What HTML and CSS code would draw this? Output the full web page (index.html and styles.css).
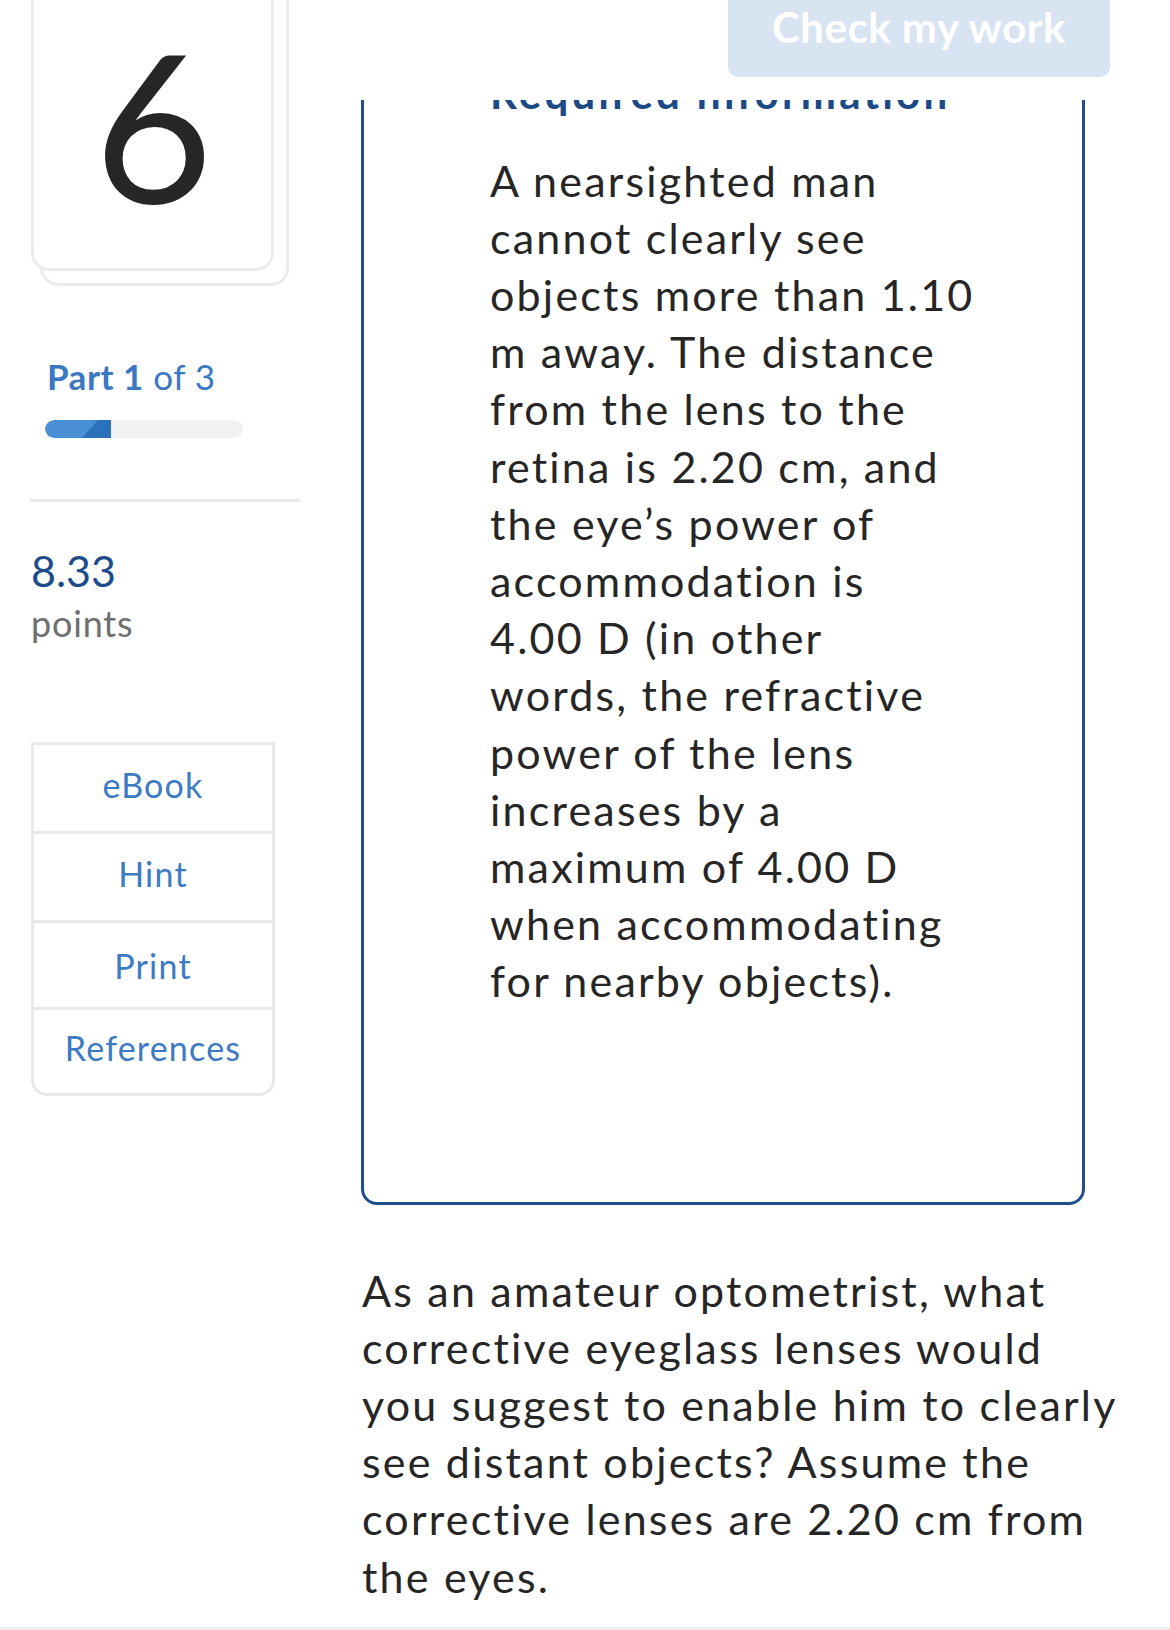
FILE: index.html
```html
<!DOCTYPE html>
<html lang="en">
<head>
<meta charset="utf-8">
<title>Question 6</title>
<link rel="stylesheet" href="styles.css">
</head>
<body>
<div class="page">
  <aside class="sidebar">
    <div class="qnum">
      <div class="qback"></div>
      <div class="qcard"><span class="qdigit">6</span></div>
    </div>
    <div class="part"><b>Part 1</b> of 3</div>
    <div class="progress"><div class="fill" style="width:33.3%"></div></div>
    <div class="divider"></div>
    <div class="score">8.33</div>
    <div class="points">points</div>
    <ul class="tools">
      <li>eBook</li>
      <li>Hint</li>
      <li>Print</li>
      <li>References</li>
    </ul>
  </aside>
  <main class="main">
    <div class="topbar"><button class="check" type="button">Check my work</button></div>
    <section class="info">
      <h2 class="info-title">Required information</h2>
      <p class="info-text">A nearsighted man<br>cannot clearly see<br>objects more than 1.10<br>m away. The distance<br>from the lens to the<br>retina is 2.20 cm, and<br>the eye’s power of<br>accommodation is<br>4.00 D (in other<br>words, the refractive<br>power of the lens<br>increases by a<br>maximum of 4.00 D<br>when accommodating<br>for nearby objects).</p>
    </section>
    <p class="question">As an amateur optometrist, what<br>corrective eyeglass lenses would<br>you suggest to enable him to clearly<br>see distant objects? Assume the<br>corrective lenses are 2.20 cm from<br>the eyes.</p>
  </main>
</div>
<div class="bottomline"></div>
</body>
</html>
```
FILE: styles.css
```css
html, body {
  margin: 0;
  padding: 0;
  background: #ffffff;
}
body {
  width: 1170px;
  height: 1630px;
  overflow: hidden;
  position: relative;
  font-family: Lato, "Noto Sans", sans-serif;
  color: #262626;
}
.page {
  display: flex;
  align-items: flex-start;
}
.sidebar {
  width: 361px;
  flex: none;
  box-sizing: border-box;
  padding-left: 31px;
  display: flex;
  flex-direction: column;
  align-items: flex-start;
}
.qnum {
  position: relative;
  width: 243px;
  height: 271px;
}
.qback {
  position: absolute;
  left: 9px;
  right: -15px;
  top: -30px;
  bottom: -15px;
  border: 3px solid #ececec;
  border-radius: 18px;
  background: #fff;
}
.qcard {
  position: relative;
  box-sizing: border-box;
  width: 243px;
  height: 271px;
  padding-top: 1px;
  border: 3px solid #ececec;
  border-top: 0;
  border-radius: 0 0 18px 18px;
  background: #fff;
  text-align: center;
}
.qdigit {
  display: block;
  font-size: 205px;
  line-height: 246px;
  color: #262626;
  margin-left: 2px;
}
.part {
  margin-top: 83px;
  margin-left: 16px;
  font-size: 35px;
  line-height: 44px;
  color: #3a78c2;
  letter-spacing: 0.5px;
}
.part b {
  font-weight: 700;
}
.progress {
  margin-top: 22px;
  margin-left: 14px;
  width: 198px;
  height: 18px;
  border-radius: 9px;
  background: #f1f1f1;
  overflow: hidden;
}
.fill {
  position: relative;
  height: 100%;
  background: #4a8fd6;
  border-radius: 9px 0 0 9px;
}
.fill::after {
  content: "";
  position: absolute;
  right: 0;
  top: 0;
  bottom: 0;
  width: 29px;
  background: #2b72ba;
  clip-path: polygon(16px 0, 100% 0, 100% 100%, 0 100%);
}
.divider {
  margin-top: 61px;
  margin-left: -1px;
  width: 270px;
  height: 3px;
  background: #ececec;
}
.score {
  margin-top: 43px;
  margin-left: 0;
  font-size: 43px;
  line-height: 52px;
  color: #1d4c8c;
}
.points {
  margin-top: 4px;
  margin-left: 0;
  font-size: 36px;
  line-height: 44px;
  color: #6f6f6f;
  letter-spacing: 0.8px;
}
.tools {
  list-style: none;
  margin: 97px 0 0 0;
  padding: 0;
  width: 244px;
  box-sizing: border-box;
  border: 3px solid #e9e9e9;
  border-radius: 0 0 16px 16px;
}
.tools li {
  box-sizing: border-box;
  height: 87px;
  padding-bottom: 8px;
  display: flex;
  align-items: center;
  justify-content: center;
  font-size: 34px;
  color: #3c7bc3;
  letter-spacing: 1.2px;
  border-top: 3px solid #e9e9e9;
}
.tools li:first-child {
  border-top: 0;
  height: 86px;
}
.tools li:nth-child(2) {
  height: 89px;
}
.tools li:nth-child(3) {
  height: 87px;
  padding-bottom: 0;
}
.tools li:nth-child(4) {
  height: 86px;
}
.main {
  flex: 1;
  position: relative;
  padding-top: 20px;
}
.topbar {
  position: absolute;
  top: 0;
  left: -10px;
  right: 0;
  height: 100px;
  background: #ffffff;
  z-index: 2;
  display: flex;
  justify-content: flex-end;
  align-items: flex-start;
  padding-right: 60px;
}
.check {
  width: 382px;
  height: 100px;
  margin-top: -23px;
  border: 0;
  border-radius: 10px;
  background: #d8e4f2;
  color: #ffffff;
  font-family: Lato, "Noto Sans", sans-serif;
  font-weight: 700;
  font-size: 42px;
  letter-spacing: 0.5px;
  padding: 0;
}
.info {
  width: 724px;
  box-sizing: border-box;
  border: 3px solid #1f4e8c;
  border-radius: 16px;
  padding: 42px 0 192px 126px;
}
.info-title {
  margin: 0;
  font-size: 42px;
  line-height: 56.6px;
  font-weight: 700;
  color: #1b4a87;
  letter-spacing: 3.2px;
  white-space: nowrap;
}
.info-text {
  margin: 30px 0 0 0;
  font-size: 43px;
  line-height: 57.2px;
  letter-spacing: 2.2px;
  white-space: nowrap;
}
.question {
  margin: 57px 0 0 1px;
  font-size: 43px;
  line-height: 57.2px;
  letter-spacing: 2.2px;
  white-space: nowrap;
}
.bottomline {
  position: absolute;
  left: 0;
  right: 0;
  bottom: 0;
  height: 3px;
  background: #eeeeee;
}
```
